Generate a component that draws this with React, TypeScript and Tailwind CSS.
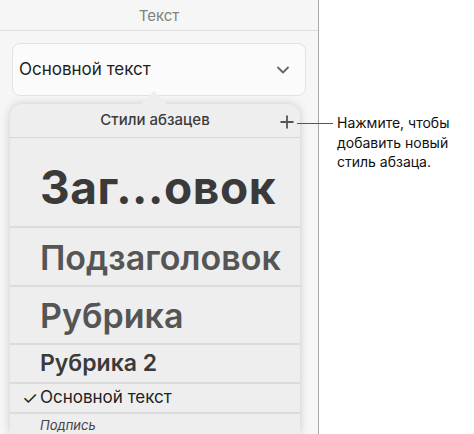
import { ChevronDown, Plus } from "lucide-react";

const font = { fontFamily: "Inter, 'Noto Sans', sans-serif" };

function StyleRow({ h, children }: { h: string; children: React.ReactNode }) {
  return (
    <div className={`${h} flex shrink-0 items-center border-b-2 border-[#dcdcdc] pl-[30px]`}>
      {children}
    </div>
  );
}

export default function App() {
  return (
    <div className="relative flex h-[434px] w-[474px] overflow-hidden bg-white" style={font}>
      <div className="flex h-full w-[319px] shrink-0 flex-col border-r border-[#a9a9a9] bg-[#f6f6f6]">
        <div className="flex h-[31px] shrink-0 items-center justify-center border-b border-[#dedede] pt-[2px] text-[15px] text-[#808080]">
          Текст
        </div>
        <div className="shrink-0 px-[12px] pt-[12px]">
          <div className="flex h-[53px] w-[294px] items-center justify-between rounded-[8px] border border-[#e2e2e2] bg-[#fbfbfb] pl-[6px] pr-[12px]">
            <span className="text-[17px] text-[#1e1e1e]">Основной текст</span>
            <ChevronDown size={20} strokeWidth={2.2} className="text-[#666]" />
          </div>
        </div>
        <div className="relative ml-[10px] mt-[8px] flex min-h-0 w-[290px] flex-1 flex-col rounded-t-[12px] bg-[#eeeeee] shadow-[0_0_10px_rgba(0,0,0,0.18)]">
          <div className="absolute -top-[13px] left-[131px] h-0 w-0 border-x-[13px] border-b-[13px] border-x-transparent border-b-[#eeeeee]" />
          <div className="relative flex h-[34px] shrink-0 items-center justify-center border-b border-[#d8d8d8]">
            <span className="text-[15px] font-medium text-[#3c3c3c]">Стили абзацев</span>
            <Plus size={20} strokeWidth={2.2} className="absolute right-[3px] top-[8px] text-[#555]" />
          </div>
          <StyleRow h="h-[90px] pt-[10px]">
            <span className="text-[46px] font-bold tracking-[0.6px] text-[#3a3a3a]">Заг...овок</span>
          </StyleRow>
          <StyleRow h="h-[59px] pt-[2px]">
            <span className="text-[34px] font-semibold text-[#555]">Подзаголовок</span>
          </StyleRow>
          <StyleRow h="h-[58px]">
            <span className="text-[34px] font-semibold text-[#555]">Рубрика</span>
          </StyleRow>
          <StyleRow h="h-[39px]">
            <span className="text-[23px] font-semibold text-[#3a3a3a]">Рубрика 2</span>
          </StyleRow>
          <div className="relative flex h-[30px] shrink-0 items-center border-b-2 border-[#dcdcdc] pl-[30px]">
            <span className="absolute left-[12px] text-[18px] text-[#222]">✓</span>
            <span className="text-[17px] text-[#222]">Основной текст</span>
          </div>
          <div className="flex h-[24px] shrink-0 items-center pl-[30px]">
            <span className="text-[13px] italic text-[#444]">Подпись</span>
          </div>
        </div>
      </div>
      <div className="absolute left-[297px] top-[123px] h-px w-[36px] bg-[#555]" />
      <div className="pl-[18px] pt-[113px] text-[14px] leading-[19.5px] text-[#111]">
        Нажмите, чтобы
        <br />
        добавить новый
        <br />
        стиль абзаца.
      </div>
    </div>
  );
}
